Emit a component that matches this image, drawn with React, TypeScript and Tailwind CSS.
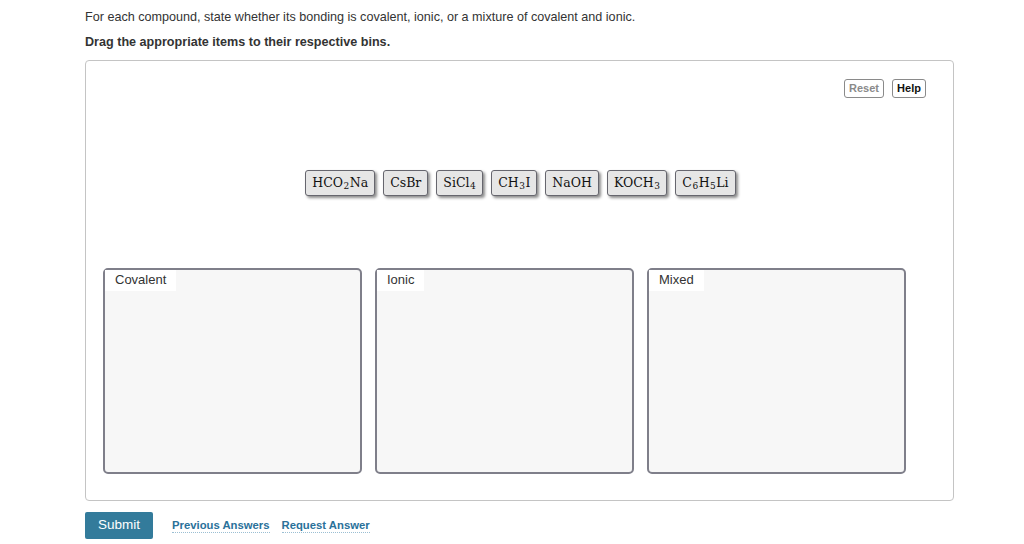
import React from 'react'

const FONT = { fontFamily: '"Liberation Sans", Arial, sans-serif' }
const SERIF = { fontFamily: '"DejaVu Serif", "Liberation Serif", serif' }

type Part = { t: string; sub?: boolean }

const TILES: Part[][] = [
  [{ t: 'HCO' }, { t: '2', sub: true }, { t: 'Na' }],
  [{ t: 'CsBr' }],
  [{ t: 'SiCl' }, { t: '4', sub: true }],
  [{ t: 'CH' }, { t: '3', sub: true }, { t: 'I' }],
  [{ t: 'NaOH' }],
  [{ t: 'KOCH' }, { t: '3', sub: true }],
  [{ t: 'C' }, { t: '6', sub: true }, { t: 'H' }, { t: '5', sub: true }, { t: 'Li' }],
]

const BINS = ['Covalent', 'Ionic', 'Mixed']

function Tile({ parts }: { parts: Part[] }) {
  return (
    <div
      className="h-[26px] px-[6px] flex items-center bg-[#e6e6e6] border-[1.5px] border-[#66666e] rounded-[3px] shadow-[2px_2px_3px_rgba(0,0,0,0.45)] text-[12.5px] text-[#111] leading-none"
      style={SERIF}
    >
      {parts.map((p, i) =>
        p.sub ? (
          <span key={i} className="text-[9px] relative top-[3px] px-[0.5px]">{p.t}</span>
        ) : (
          <span key={i}>{p.t}</span>
        )
      )}
    </div>
  )
}

export default function App() {
  return (
    <div className="w-[1024px] h-[544px] bg-white overflow-hidden pl-[85px]" style={FONT}>
      <p className="pt-[10px] text-[12.6px] leading-[14px] text-[#333]">
        For each compound, state whether its bonding is covalent, ionic, or a mixture of covalent and ionic.
      </p>
      <p className="mt-[11px] text-[12.6px] leading-[14px] font-bold text-[#333]">
        Drag the appropriate items to their respective bins.
      </p>

      <div className="mt-[11px] w-[869px] h-[441px] border border-[#c4c4c4] rounded-[4px] flex flex-col">
        <div className="flex justify-end gap-[8px] pt-[18px] pr-[27px]">
          <button className="h-[19px] w-[40px] border border-[#8a8a8a] rounded-[3px] bg-white text-[11px] font-bold text-[#8a8a8a]">
            Reset
          </button>
          <button className="h-[19px] w-[34px] border border-[#8a8a8a] rounded-[3px] bg-white text-[11px] font-bold text-[#111]">
            Help
          </button>
        </div>

        <div className="mt-[72px] flex justify-center gap-[8px] pl-[2px]">
          {TILES.map((parts, i) => (
            <Tile key={i} parts={parts} />
          ))}
        </div>

        <div className="mt-[72px] flex gap-[13px] pl-[17px]">
          {BINS.map((b) => (
            <div
              key={b}
              className="w-[259px] h-[206px] bg-[#f7f7f7] border-2 border-[#7f7f8a] rounded-[5px]"
            >
              <div className="w-fit bg-white px-[10px] h-[21px] leading-[20px] text-[13px] text-[#333]">
                {b}
              </div>
            </div>
          ))}
        </div>
      </div>

      <div className="mt-[11px] flex items-center">
        <button className="h-[27px] w-[68px] bg-[#337b9b] rounded-[2px] text-white text-[13.5px]">
          Submit
        </button>
        <a className="ml-[19px] text-[11.3px] font-bold text-[#2a719a] border-b border-dotted border-[#9bbfd3] leading-[13px]">
          Previous Answers
        </a>
        <a className="ml-[12px] text-[11.3px] font-bold text-[#2a719a] border-b border-dotted border-[#9bbfd3] leading-[13px]">
          Request Answer
        </a>
      </div>
    </div>
  )
}
